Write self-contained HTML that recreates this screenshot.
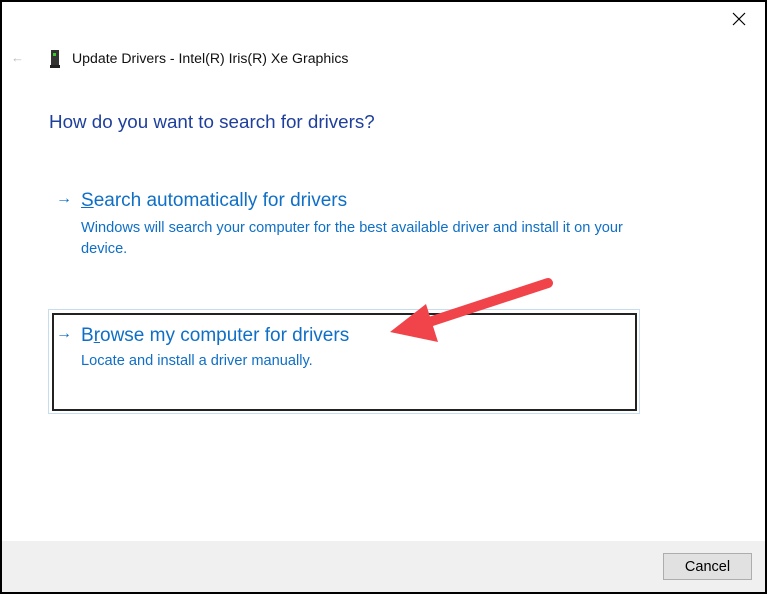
<!DOCTYPE html>
<html><head><style>
body{margin:0;width:767px;height:594px;overflow:hidden;font-family:"Liberation Sans",sans-serif;background:#fff;position:relative}
.win{position:absolute;left:0;top:0;width:763px;height:590px;border:2px solid #000;z-index:5}
.t{position:absolute;white-space:nowrap}
.foot{position:absolute;left:2px;top:541px;width:763px;height:51px;background:#f0f0f0}
.btn{position:absolute;left:663px;top:553px;width:89px;height:27px;border:1px solid #adadad;background:#e1e1e1;font-size:14.5px;text-align:center;line-height:26px;color:#000;box-sizing:border-box}
.link{color:#0f6fc6}
</style></head><body>
<div class="win"></div>
<svg style="position:absolute;left:731px;top:11px" width="16" height="16"><path d="M2 2L14 14M14 2L2 14" stroke="#000" stroke-width="1.2"/></svg>
<div class="t" style="left:11px;top:50px;color:#bbb;font-size:13px">←</div>
<svg style="position:absolute;left:50px;top:50px" width="10" height="18"><rect x="1" y="0" width="8" height="16" fill="#333"/><rect x="3" y="3" width="3" height="3" fill="#3c3"/><rect x="0" y="15" width="10" height="3" fill="#222"/></svg>
<div class="t" style="left:72px;top:50px;font-size:14.1px;color:#111">Update Drivers - Intel(R) Iris(R) Xe Graphics</div>
<div class="t" style="left:49px;top:111px;font-size:18.8px;color:#1f3f9c">How do you want to search for drivers?</div>
<div class="t link" style="left:56px;top:190px;font-size:16px">→</div>
<div class="t link" style="left:81px;top:190px;font-size:19px"><u>S</u>earch automatically for drivers</div>
<div class="t link" style="left:81px;top:218px;font-size:14.6px;line-height:21px">Windows will search your computer for the best available driver and install it on your<br>device.</div>
<div style="position:absolute;left:48px;top:309px;width:592px;height:105px;border:1px solid #c6dcef;box-sizing:border-box"></div>
<div style="position:absolute;left:52px;top:313px;width:585px;height:98px;border:2px solid #222;box-sizing:border-box"></div>
<div class="t link" style="left:56px;top:325px;font-size:16px">→</div>
<div class="t link" style="left:81px;top:325px;font-size:19px">B<u>r</u>owse my computer for drivers</div>
<div class="t link" style="left:81px;top:353px;font-size:14.6px">Locate and install a driver manually.</div>
<svg style="position:absolute;left:380px;top:270px" width="190" height="80"><path d="M168 13L40 55" stroke="#f0444a" stroke-width="10" stroke-linecap="round"/><path d="M10 62L46 34L58 72Z" fill="#f0444a"/></svg>
<div class="foot"></div>
<div class="btn">Cancel</div>
</body></html>
